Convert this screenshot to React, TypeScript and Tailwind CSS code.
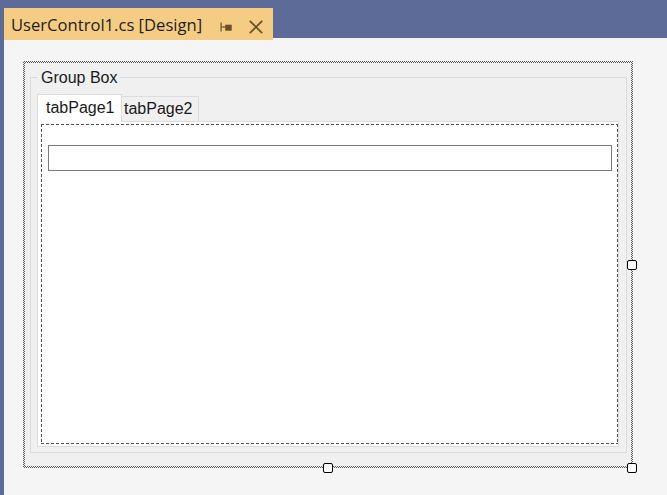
import React from "react";

function Handle({ cls }: { cls: string }) {
  return (
    <div
      className={
        "absolute w-[10px] h-[10px] bg-white border border-black rounded-[2px] " + cls
      }
    />
  );
}

export default function App() {
  return (
    <div className="w-[667px] h-[495px] flex bg-[#f5f5f5] overflow-hidden font-['Liberation_Sans',Arial,sans-serif] text-[16px] text-black">
      <div className="w-[4px] h-full shrink-0 bg-[#5d6b99]" />
      <div className="flex-1 flex flex-col">
        <div className="h-[40px] shrink-0 flex bg-[image:linear-gradient(to_bottom,#5d6b99_38px,#f5f5f5_38px)]">
          <div className="mt-[8px] h-[32px] w-[269px] bg-[#f5cc84] flex items-start pl-[7px]">
            <span className="w-[209px] pt-[6px] leading-[22px] text-[16.6px] text-[#1e1e1e] whitespace-nowrap font-['Open_Sans','Noto_Sans',sans-serif]">
              UserControl1.cs [Design]
            </span>
            <svg
              className="mt-[14px] shrink-0"
              width="13"
              height="10"
              viewBox="0 0 13 10"
            >
              <rect x="0.5" y="0.5" width="1.2" height="9" fill="#6b4f27" />
              <rect x="1.5" y="4.4" width="4" height="1.2" fill="#6b4f27" />
              <rect x="5.2" y="2.7" width="6.5" height="6" fill="#6b4f27" />
            </svg>
            <svg
              className="ml-[16px] mt-[12px] shrink-0"
              width="14"
              height="14"
              viewBox="0 0 14 14"
            >
              <path
                d="M0.8 0.8 L13.2 13.2 M13.2 0.8 L0.8 13.2"
                stroke="#6f5228"
                strokeWidth="1.8"
                fill="none"
              />
            </svg>
          </div>
        </div>
        <div className="flex-1 pl-[19px] pt-[21px]">
          <div className="relative w-[610px] h-[407px] p-[2px] bg-[image:repeating-conic-gradient(#5a5a5a_0%_25%,#f0f0f0_0%_50%)] bg-[length:2px_2px]">
            <div className="w-full h-full bg-[#f0f0f0] pl-[5px] pt-[14px]">
              <div className="relative w-[597px] h-[376px] border border-[#dcdcdc] pl-[6px] pt-[16px]">
                <span className="absolute left-[7px] top-[-9px] px-[3px] bg-[#f0f0f0] leading-[18px] text-[#1a1a1a]">
                  Group Box
                </span>
                <div className="flex items-end h-[27px]">
                  <div className="relative z-10 w-[85px] h-[28px] mb-[-1px] bg-white border-l border-t border-r border-[#dcdcdc] pl-[8px] pt-[4px] leading-[18px] text-[#1a1a1a]">
                    tabPage1
                  </div>
                  <div className="w-[77px] h-[25px] bg-[#f0f0f0] border-t border-r border-[#dcdcdc] pl-[2px] pt-[3px] leading-[18px] text-[#1a1a1a]">
                    tabPage2
                  </div>
                </div>
                <div className="w-[582px] h-[326px] border border-[#dcdcdc] bg-white pl-[3px] pt-[2px]">
                  <div className="w-[577px] h-[320px] pl-[7px] pt-[21px] bg-no-repeat bg-[image:repeating-linear-gradient(90deg,#505050_0px_3px,transparent_3px_5px),repeating-linear-gradient(90deg,#505050_0px_3px,transparent_3px_5px),repeating-linear-gradient(180deg,#505050_0px_3px,transparent_3px_5px),repeating-linear-gradient(180deg,#505050_0px_3px,transparent_3px_5px)] bg-[length:100%_1px,100%_1px,1px_100%,1px_100%] bg-[position:left_top,left_bottom,left_top,right_top]">
                    <div className="w-[564px] h-[26px] border border-[#7a7a7a] bg-white" />
                  </div>
                </div>
              </div>
            </div>
            <Handle cls="left-[604px] top-[199px]" />
            <Handle cls="left-[300px] top-[402px]" />
            <Handle cls="left-[604px] top-[402px]" />
          </div>
        </div>
      </div>
    </div>
  );
}
